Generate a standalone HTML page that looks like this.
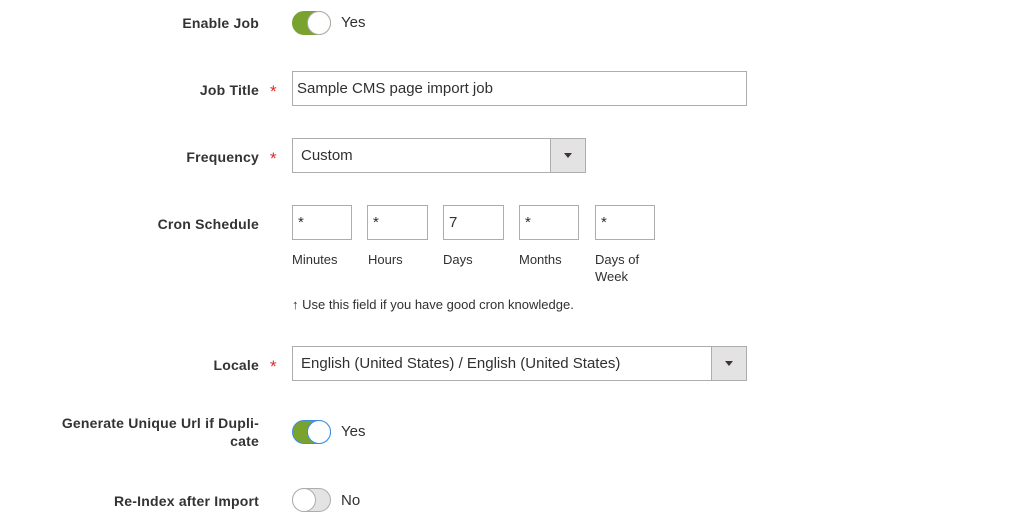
<!DOCTYPE html>
<html><head><style>
*{box-sizing:border-box;margin:0;padding:0}
body{width:1024px;height:532px;background:#fff;font-family:"Liberation Sans",sans-serif;color:#303030;position:relative;overflow:hidden;font-size:14px}
.lbl{position:absolute;right:765px;font-weight:bold;font-size:14px;letter-spacing:0.2px;text-align:right;line-height:18px;color:#333}
.req{position:absolute;left:270px;color:#e22626;font-size:17px}
.inp{position:absolute;border:1px solid #adadad;background:#fff;padding-left:8px;font-size:15px;color:#303030}
.btn{position:absolute;top:-1px;right:-1px;bottom:-1px;width:36px;background:#e3e3e3;border:1px solid #adadad}
.btn:after{content:"";position:absolute;left:13px;top:14px;border-left:4px solid transparent;border-right:4px solid transparent;border-top:5px solid #41362f}
.tg{position:absolute;left:292px;width:39px;height:24px;border-radius:12px}
.tg.on{background:#79a22e;border:1px solid #79a22e}
.tg.off{background:#e3e3e3;border:1px solid #adadad}
.tg i{position:absolute;top:-1px;width:24px;height:24px;border-radius:50%;background:#fff;border:1px solid #adadad}
.tg.on i{right:-1px}.tg.off i{left:-1px}
.tg.focus{border-color:#3d8ee0}.tg.focus i{border-color:#3d8ee0}
.tx{position:absolute;font-size:15px;line-height:18px}
.sm{position:absolute;font-size:13px;line-height:17px}
</style></head><body>
<div class="lbl" style="top:14px">Enable Job</div>
<div class="tg on" style="top:11px"><i></i></div>
<div class="tx" style="left:341px;top:14px">Yes</div>

<div class="lbl" style="top:81px">Job Title</div><div class="req" style="top:82px">*</div>
<div class="inp" style="left:292px;top:71px;width:455px;height:35px;line-height:33px;padding-left:4px">Sample CMS page import job</div>

<div class="lbl" style="top:148px">Frequency</div><div class="req" style="top:149px">*</div>
<div class="inp" style="left:292px;top:138px;width:294px;height:35px;line-height:33px">Custom<div class="btn"></div></div>

<div class="lbl" style="top:215px">Cron Schedule</div>
<div class="inp" style="left:292px;top:205px;width:60px;height:35px;line-height:33px;padding-left:5px">*</div>
<div class="inp" style="left:367px;top:205px;width:61px;height:35px;line-height:33px;padding-left:5px">*</div>
<div class="inp" style="left:443px;top:205px;width:61px;height:35px;line-height:33px;padding-left:5px">7</div>
<div class="inp" style="left:519px;top:205px;width:60px;height:35px;line-height:33px;padding-left:5px">*</div>
<div class="inp" style="left:595px;top:205px;width:60px;height:35px;line-height:33px;padding-left:5px">*</div>
<div class="sm" style="left:292px;top:251px">Minutes</div>
<div class="sm" style="left:368px;top:251px">Hours</div>
<div class="sm" style="left:443px;top:251px">Days</div>
<div class="sm" style="left:519px;top:251px">Months</div>
<div class="sm" style="left:595px;top:251px">Days of<br>Week</div>
<div class="sm" style="left:292px;top:296px">↑ Use this field if you have good cron knowledge.</div>

<div class="lbl" style="top:356px">Locale</div><div class="req" style="top:357px">*</div>
<div class="inp" style="left:292px;top:346px;width:455px;height:35px;line-height:33px">English (United States) / English (United States)<div class="btn"></div></div>

<div class="lbl" style="top:414px">Generate Unique Url if Dupli-<br>cate</div>
<div class="tg on focus" style="top:420px"><i></i></div>
<div class="tx" style="left:341px;top:423px">Yes</div>

<div class="lbl" style="top:492px">Re-Index after Import</div>
<div class="tg off" style="top:488px"><i></i></div>
<div class="tx" style="left:341px;top:492px">No</div>
</body></html>
